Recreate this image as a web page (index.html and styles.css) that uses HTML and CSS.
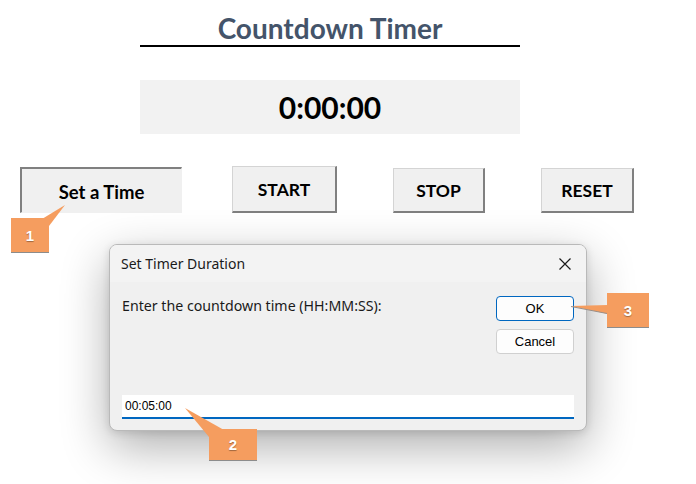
FILE: index.html
```html
<!DOCTYPE html>
<html>
<head>
<meta charset="utf-8">
<link rel="stylesheet" href="styles.css">
</head>
<body>
<div class="sheet">
  <div class="header">
    <h1 class="title">Countdown Timer</h1>
  </div>
  <div class="display">0:00:00</div>
  <div class="buttons">
    <div class="btn btn-pressed btn-set">Set a Time</div>
    <div class="btn btn-start">START</div>
    <div class="btn btn-stop">STOP</div>
    <div class="btn btn-reset">RESET</div>
  </div>

  <div class="dialog">
    <div class="dlg-titlebar">
      <span class="dlg-title">Set Timer Duration</span>
      <svg class="dlg-close" width="14" height="14" viewBox="0 0 14 14"><path d="M1.5 1.5 L12.5 12.5 M12.5 1.5 L1.5 12.5" stroke="#1a1a1a" stroke-width="1.2" fill="none"/></svg>
    </div>
    <div class="dlg-body">
      <div class="dlg-row">
        <div class="dlg-label">Enter the countdown time (HH:MM:SS):</div>
        <div class="dlg-actions">
          <div class="wbtn wbtn-default">OK</div>
          <div class="wbtn">Cancel</div>
        </div>
      </div>
      <div class="dlg-input">00:05:00</div>
    </div>
  </div>

  <svg class="wedges" width="696" height="484" viewBox="0 0 696 484">
    <polygon points="42,219 65,205 49,226" fill="#f59d5f"/>
    <polygon points="185,408 224,430 209,437" fill="#f59d5f"/>
    <polygon points="571,306 608,305 608,314" fill="#f59d5f"/>
    <line x1="571" y1="306.5" x2="607" y2="313.5" stroke="#9a8f88" stroke-width="1"/>
  </svg>
  <div class="callout c1">1</div>
  <div class="callout c2">2</div>
  <div class="callout c3">3</div>
</div>
</body>
</html>
```
FILE: styles.css
```css
* { box-sizing: border-box; }
html, body { margin: 0; padding: 0; background: #ffffff; }
body { width: 696px; height: 484px; overflow: hidden; font-family: "Lato", "Liberation Sans", sans-serif; }

.sheet { position: relative; width: 696px; height: 484px; padding-top: 11px; }

.header { margin-left: 140px; width: 380px; border-bottom: 2px solid #000; height: 36px; }
.title { margin: 0; text-align: center; font-family: "Lato", sans-serif; font-weight: 700; font-size: 28px; line-height: 34px; color: #44546a; }

.display { margin: 33px 0 0 140px; width: 380px; height: 54px; background: #f2f2f2; text-align: center; font-family: "Lato", sans-serif; font-weight: 700; font-size: 30px; line-height: 54px; color: #000; }

.buttons { display: flex; align-items: flex-start; margin-top: 33px; padding-left: 20px; gap: 56px; }
.btn { height: 46px; background: #f0f0f0; display: flex; align-items: center; justify-content: center; font-family: "Lato", sans-serif; font-weight: 700; font-size: 17.5px; color: #000;
  border-top: 1px solid #d4d4d4; border-left: 1px solid #d4d4d4; border-right: 2px solid #808080; border-bottom: 2px solid #808080; }
.btn-pressed { border-top: 2px solid #808080; border-left: 2px solid #808080; border-right: 1px solid #f0f0f0; border-bottom: 1px solid #f0f0f0; padding-top: 2px; font-size: 18.5px; }
.btn-set { width: 162px; margin-right: -6px; }
.btn-start { width: 105px; height: 47px; margin-top: -1px; }
.btn-stop { width: 92px; margin-top: 1px; height: 45px; }
.btn-reset { width: 93px; margin-top: 1px; height: 45px; }

.dialog { position: absolute; left: 109px; top: 244px; width: 478px; height: 187px; background: #f0f0f0; border: 1px solid #b9b9b9; border-radius: 8px; overflow: hidden;
  box-shadow: 0 16px 48px rgba(0,0,0,0.32), 0 2px 8px rgba(0,0,0,0.12); display: flex; flex-direction: column; font-family: "Noto Sans", "Open Sans", sans-serif; }
.dlg-titlebar { height: 37px; background: #f3f3f3; display: flex; align-items: center; justify-content: space-between; padding: 0 14px 0 11px; }
.dlg-title { font-size: 14px; color: #1a1a1a; }
.dlg-close { display: block; }
.dlg-body { flex: 1; display: flex; flex-direction: column; padding: 14px 12px 11px 12px; }
.dlg-row { display: flex; justify-content: space-between; }
.dlg-label { font-size: 14.2px; color: #1a1a1a; padding-top: 0; }
.dlg-actions { display: flex; flex-direction: column; gap: 8px; }
.wbtn { width: 78px; height: 25px; background: #fdfdfd; border: 1px solid #d0d0d0; border-radius: 4px; display: flex; align-items: center; justify-content: center; font-family: "Liberation Sans", Arial, sans-serif; font-size: 13px; color: #000; }
.wbtn-default { border-color: #0067c0; }
.dlg-input { margin-top: auto; height: 24px; background: #fff; border-bottom: 2px solid #0067c0; font-family: "Liberation Sans", Arial, sans-serif; font-size: 12px; color: #000; padding: 4px 3px 0; }

.wedges { position: absolute; left: 0; top: 0; pointer-events: none; }
.callout { position: absolute; background: #f59d5f; color: #fff; font-family: "Liberation Sans", Arial, sans-serif; font-weight: 700; font-size: 15px; display: flex; align-items: center; justify-content: center; box-shadow: 0 1px 0 #8c8c8c; text-shadow: 0 1px 1px rgba(0,0,0,0.35); }
.c1 { left: 11px; top: 218px; width: 38px; height: 34px; }
.c2 { left: 209px; top: 429px; width: 48px; height: 31px; }
.c3 { left: 607px; top: 293px; width: 42px; height: 34px; }
```
